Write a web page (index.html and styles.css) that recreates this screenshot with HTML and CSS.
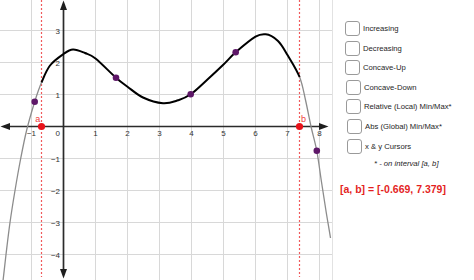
FILE: index.html
```html
<!DOCTYPE html>
<html>
<head>
<meta charset="utf-8">
<link rel="stylesheet" href="styles.css">
</head>
<body>
<div class="app">
  <div class="graph">
    <svg class="plot" width="332" height="280" viewBox="0 0 332 280">
      <g class="grid">
        <line x1="31.5" y1="0" x2="31.5" y2="280"/>
        <line x1="95.5" y1="0" x2="95.5" y2="280"/>
        <line x1="127.5" y1="0" x2="127.5" y2="280"/>
        <line x1="159.5" y1="0" x2="159.5" y2="280"/>
        <line x1="191.5" y1="0" x2="191.5" y2="280"/>
        <line x1="223.5" y1="0" x2="223.5" y2="280"/>
        <line x1="255.5" y1="0" x2="255.5" y2="280"/>
        <line x1="287.5" y1="0" x2="287.5" y2="280"/>
        <line x1="319.5" y1="0" x2="319.5" y2="280"/>
        <line x1="0" y1="30.5" x2="332" y2="30.5"/>
        <line x1="0" y1="62.5" x2="332" y2="62.5"/>
        <line x1="0" y1="94.5" x2="332" y2="94.5"/>
        <line x1="0" y1="158.5" x2="332" y2="158.5"/>
        <line x1="0" y1="190.5" x2="332" y2="190.5"/>
        <line x1="0" y1="222.5" x2="332" y2="222.5"/>
        <line x1="0" y1="254.5" x2="332" y2="254.5"/>
      </g>
      <g class="dash">
        <line x1="41.5" y1="0" x2="41.5" y2="277"/>
        <line x1="299.5" y1="0" x2="299.5" y2="277"/>
      </g>
      <g class="axes">
        <line x1="6" y1="126.5" x2="322" y2="126.5"/>
        <line x1="63.5" y1="7" x2="63.5" y2="271"/>
      </g>
      <g class="arrows">
        <polygon points="63.5,0.5 60,10 67,10"/>
        <polygon points="63.5,278.5 60,269 67,269"/>
        <polygon points="0.5,126.5 10,123 10,130"/>
        <polygon points="328.5,126.5 319,123 319,130"/>
      </g>
      <g class="tick">
        <text x="31.5" y="136" text-anchor="middle">−1</text>
        <text x="60" y="136" text-anchor="end">0</text>
        <text x="95.5" y="136" text-anchor="middle">1</text>
        <text x="127.5" y="136" text-anchor="middle">2</text>
        <text x="159.5" y="136" text-anchor="middle">3</text>
        <text x="191.5" y="136" text-anchor="middle">4</text>
        <text x="223.5" y="136" text-anchor="middle">5</text>
        <text x="255.5" y="136" text-anchor="middle">6</text>
        <text x="287.5" y="136" text-anchor="middle">7</text>
        <text x="319.5" y="136" text-anchor="middle">8</text>
        <text x="60" y="33.5" text-anchor="end">3</text>
        <text x="60" y="65.5" text-anchor="end">2</text>
        <text x="60" y="97.5" text-anchor="end">1</text>
        <text x="60" y="161.5" text-anchor="end">−1</text>
        <text x="60" y="193.5" text-anchor="end">−2</text>
        <text x="60" y="225.5" text-anchor="end">−3</text>
        <text x="60" y="257.5" text-anchor="end">−4</text>
      </g>
      <path class="curve-out" d="M3,281 C4,272.42 4.83,264.25 6,254.5 C7.17,244.75 8.5,233.17 10,222.5 C11.5,211.83 13.22,201.17 15,190.5 C16.78,179.83 18.75,168.58 20.7,158.5 C22.65,148.42 24.37,139.47 26.7,130 C29.03,120.53 32.23,109.62 34.7,101.7 C37.17,93.78 38.95,88.53 41.5,82.5"/>
      <path class="curve-out" d="M299.6,77 C302.6,84.5 303.6,91.75 305.5,100 C307.4,108.25 309.12,118 311,126.5 C312.88,135 315.05,141.75 316.8,151 C318.55,160.25 319.97,172 321.5,182 C323.03,192 324.5,201.67 326,211 C327.5,220.33 329.17,229.5 330.5,238"/>
      <path class="curve-in" d="M41.5,82.5 C44.05,76.47 46.33,70.25 50,65.5 C53.67,60.75 59.67,56.67 63.5,54 C67.33,51.33 69.42,49.67 73,49.5 C76.58,49.33 81.25,51.5 85,53 C88.75,54.5 90.33,54.38 95.5,58.5 C100.67,62.62 110.67,73 116,77.7 C121.33,82.4 123,83.4 127.5,86.7 C132,90 137.08,94.73 143,97.5 C148.92,100.27 157.17,102.83 163,103.3 C168.83,103.770 173.38,101.8 178,100.3 C182.62,98.8 185.7,97.85 190.7,94.3 C195.7,90.75 202.53,83.97 208,79 C213.47,74.03 218.88,68.95 223.5,64.5 C228.12,60.05 230.37,56.93 235.7,52.3 C241.03,47.67 250.5,39.7 255.5,36.7 C260.5,33.7 261.95,34.1 265.7,34.3 C269.45,34.5 274.37,37.55 278,41 C281.63,44.45 283.9,49 287.5,55 C291.1,61 296.6,69.5 299.6,77"/>
      <g class="pt-purple">
        <circle cx="34.7" cy="101.7" r="3.3"/>
        <circle cx="116" cy="77.7" r="3.3"/>
        <circle cx="190.7" cy="94.3" r="3.3"/>
        <circle cx="235.7" cy="52.3" r="3.3"/>
        <circle cx="316.8" cy="150.7" r="3.3"/>
      </g>
      <g class="pt-red">
        <circle cx="41.5" cy="126.5" r="3.6"/>
        <circle cx="299.5" cy="126.5" r="3.6"/>
      </g>
      <g class="pt-label">
        <text x="37.7" y="121.5" text-anchor="middle">a</text>
        <text x="303.5" y="121.5" text-anchor="middle">b</text>
      </g>
    </svg>
  </div>
  <div class="panel">
    <ul class="checks">
      <li class="check"><span class="box"></span><span class="label">Increasing</span></li>
      <li class="check"><span class="box"></span><span class="label">Decreasing</span></li>
      <li class="check"><span class="box"></span><span class="label">Concave-Up</span></li>
      <li class="check shift1"><span class="box"></span><span class="label">Concave-Down</span></li>
      <li class="check shift1"><span class="box"></span><span class="label">Relative (Local) Min/Max*</span></li>
      <li class="check shift2"><span class="box"></span><span class="label">Abs (Global) Min/Max*</span></li>
      <li class="check shift2"><span class="box"></span><span class="label">x &amp; y Cursors</span></li>
    </ul>
    <p class="note">* - on interval [a, b]</p>
    <p class="result">[a, b] = [-0.669, 7.379]</p>
  </div>
</div>
</body>
</html>
```

FILE: styles.css
```css
html, body {
  margin: 0;
  padding: 0;
  background: #ffffff;
}

body {
  font-family: "Liberation Sans", Arial, sans-serif;
  width: 474px;
  height: 280px;
  overflow: hidden;
}

.app {
  display: flex;
  width: 474px;
  height: 280px;
}

.graph {
  width: 332px;
  height: 280px;
  border-right: 1px solid #e2e2e2;
  flex: none;
}

.plot {
  display: block;
}

.grid line {
  stroke: #d8d8d8;
  stroke-width: 1;
}

.dash line {
  stroke: #f05a5c;
  stroke-width: 1.2;
  stroke-dasharray: 2 2;
}

.axes line {
  stroke: #2b2b2b;
  stroke-width: 1.7;
}

.arrows polygon {
  fill: #1e1e1e;
}

.tick text {
  font-family: "Liberation Sans", Arial, sans-serif;
  font-size: 8px;
  fill: #333333;
}

.curve-out {
  fill: none;
  stroke: #8c8c8c;
  stroke-width: 1.3;
}

.curve-in {
  fill: none;
  stroke: #000000;
  stroke-width: 2;
}

.pt-purple circle {
  fill: #5e1768;
}

.pt-red circle {
  fill: #e8121a;
}

.pt-label text {
  font-family: "Liberation Sans", Arial, sans-serif;
  font-size: 9px;
  fill: #ef3b3b;
}

.panel {
  flex: 1;
  padding-top: 21px;
}

.checks {
  list-style: none;
  margin: 0;
  padding: 0 0 0 12px;
  display: flex;
  flex-direction: column;
  gap: 4.6px;
}

.check {
  display: flex;
  align-items: center;
  height: 15px;
}

.check.shift1 {
  padding-left: 1px;
}

.check.shift2 {
  padding-left: 2px;
}

.box {
  width: 13px;
  height: 13px;
  border: 1px solid #9a9a9a;
  border-radius: 3px;
  background: #ffffff;
  flex: none;
}

.label {
  margin-left: 3px;
  font-size: 7.7px;
  color: #1e1e1e;
  white-space: nowrap;
}

.note {
  margin: 5px 0 0 41px;
  font-size: 7.7px;
  font-style: italic;
  color: #1e1e1e;
  line-height: 9px;
}

.result {
  margin: 15px 0 0 7px;
  font-size: 10.5px;
  font-weight: bold;
  color: #e41f1f;
  line-height: 12px;
  white-space: nowrap;
}
```
